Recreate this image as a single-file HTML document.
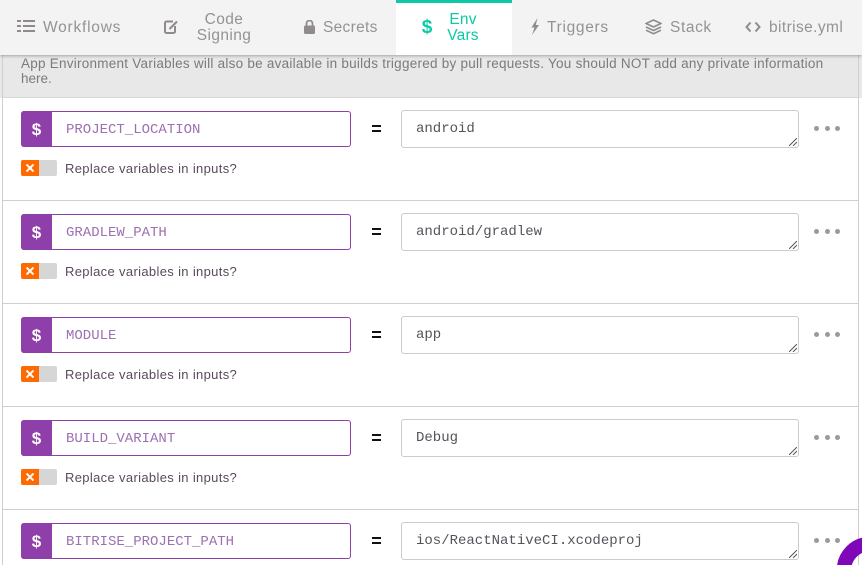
<!DOCTYPE html>
<html><head><meta charset="utf-8">
<style>
html,body{margin:0;padding:0;background:#fff}
body{width:862px;height:565px;overflow:hidden;position:relative;font-family:"Liberation Sans",sans-serif}
.abs{position:absolute}
.nav{position:absolute;left:0;top:0;width:862px;height:55px;background:#f3f3f3;box-shadow:0 1px 3px rgba(0,0,0,.3);z-index:5}
.t{position:absolute;color:#969294;font-size:15.5px;line-height:16px;white-space:nowrap}
.c{text-align:center}
.active{position:absolute;left:396px;top:0;width:116px;height:55px;background:#fff;border-top:3px solid #0dc9a5;box-sizing:border-box}
.note{position:absolute;left:0;top:55px;width:862px;height:43px;background:#e8e8e8;color:#7d797c;font-size:13.5px;line-height:15px}
.note span{position:absolute;left:21px;white-space:nowrap}
.vl{position:absolute;top:55px;width:1px;height:510px;background:#cfcfcf;z-index:1}
.line{position:absolute;left:3px;width:855px;height:1px;background:#cfcfcf}
.key{position:absolute;left:21px;width:330px;height:36px;border:1px solid #8f3fa9;border-radius:3px;box-sizing:border-box;background:#fff}
.dollar{position:absolute;left:-1px;top:-1px;width:31px;height:36px;background:#8f3fa9;border-radius:3px 0 0 3px;color:#fff;font-weight:bold;font-size:17px;line-height:37px;text-align:center}
.kt{position:absolute;left:44px;top:0;line-height:36px;font-family:"Liberation Mono",monospace;font-size:14px;color:#9c70b2;white-space:nowrap}
.eq{position:absolute;left:372px;width:9px;height:7px;border-top:2.5px solid #111;border-bottom:2.5px solid #111;box-sizing:border-box}
.val{position:absolute;left:401px;width:398px;height:38px;border:1px solid #cccccc;border-radius:3px;box-sizing:border-box;background:#fff;font-family:"Liberation Mono",monospace;font-size:14px;line-height:37px;color:#56525a;padding-left:14px}
.val svg{position:absolute;right:1px;bottom:1px}
.dots{position:absolute;left:814px;width:26px;height:5px}
.dots i{position:absolute;top:0;width:5px;height:5px;border-radius:50%;background:#9a9a9a}
.tog{position:absolute;left:21px;width:36px;height:16px;border-radius:2px;background:#d6d6d6}
.tog b{position:absolute;left:0;top:0;width:18px;height:16px;background:#ff6a00;border-radius:2px 0 0 2px}
.tog svg{position:absolute;left:5px;top:4px}
.rep{position:absolute;left:65px;font-size:13px;line-height:16px;color:#5a4a5c;white-space:nowrap;letter-spacing:.34px}
</style></head>
<body>
<div class="note"><span style="top:1px;letter-spacing:.25px">App Environment Variables will also be available in builds triggered by pull requests. You should NOT add any private information</span><span style="top:16px">here.</span></div>
<div class="vl" style="left:2px"></div>
<div class="vl" style="left:858px"></div>

<div class="nav">
<div class="active"></div>
<svg class="abs" style="left:17px;top:20px" width="18" height="13" viewBox="0 0 18 13" fill="#8f8b8d"><rect x="0" y="0" width="4" height="2"/><rect x="6" y="0" width="12" height="2"/><rect x="0" y="5" width="4" height="2"/><rect x="6" y="5" width="12" height="2"/><rect x="0" y="10" width="4" height="2"/><rect x="6" y="10" width="12" height="2"/></svg>
<div class="t" style="left:43px;top:20px;letter-spacing:.78px">Workflows</div>
<svg class="abs" style="left:163px;top:19px" width="16" height="16" viewBox="0 0 16 16" fill="none" stroke="#8f8b8d"><path d="M10 2.500H3.500a1.500 1.500 0 0 0-1.500 1.500v8.500a1.500 1.500 0 0 0 1.500 1.500h7a1.500 1.500 0 0 0 1.500-1.500V7" stroke-width="2"/><path d="M6.500 10l7.500-7.500" stroke-width="2"/></svg>
<div class="t c" style="left:184px;top:12px;width:80px;letter-spacing:.4px">Code<br>Signing</div>
<svg class="abs" style="left:304px;top:20px" width="11" height="14" viewBox="0 0 11 14" fill="#8f8b8d"><rect x="0" y="5.500" width="11" height="8.500" rx="1.500"/><path d="M2.500 6V3.500a3 3 0 0 1 6 0V6" fill="none" stroke="#8f8b8d" stroke-width="1.800"/></svg>
<div class="t" style="left:323px;top:20px;letter-spacing:.3px">Secrets</div>
<svg class="abs" style="left:421px;top:16px" width="12" height="21" viewBox="0 0 12 21"><text x="6" y="17" text-anchor="middle" font-family="Liberation Sans" font-weight="bold" font-size="19" fill="#0dc9a5">$</text></svg>
<div class="t c" style="left:433px;top:12px;width:60px;color:#0dc9a5;letter-spacing:.2px">Env<br>Vars</div>
<svg class="abs" style="left:530px;top:18px" width="10" height="17" viewBox="0 0 10 17" fill="#8f8b8d"><path d="M7.500 0L1.500 9.500h3L2 17 9 7H5.800z"/></svg>
<div class="t" style="left:547px;top:20px;letter-spacing:.7px">Triggers</div>
<svg class="abs" style="left:645px;top:19px" width="17" height="16" viewBox="0 0 17 16" fill="none" stroke="#8f8b8d" stroke-width="1.600"><path d="M8.500 1L16 4.500 8.500 8 1 4.500z"/><path d="M1 8l7.500 3.500L16 8"/><path d="M1 11.200l7.500 3.500 7.500-3.500"/></svg>
<div class="t" style="left:670px;top:20px;letter-spacing:.6px">Stack</div>
<svg class="abs" style="left:745px;top:21px" width="16" height="12" viewBox="0 0 16 12" fill="none" stroke="#8f8b8d" stroke-width="2"><path d="M5.500 1.500L1.500 6l4 4.500"/><path d="M10.500 1.500l4 4.500-4 4.500"/></svg>
<div class="t" style="left:769px;top:20px;letter-spacing:.4px">bitrise.yml</div>
</div>

<div class="line" style="top:97px;background:#d8d8d8"></div>
<div class="line" style="top:200px"></div>
<div class="line" style="top:303px"></div>
<div class="line" style="top:406px"></div>
<div class="line" style="top:509px"></div>

<div class="key" style="top:111px"><div class="dollar">$</div><div class="kt">PROJECT_LOCATION</div></div>
<div class="eq" style="top:125px"></div>
<div class="val" style="top:110px">android<svg width="8" height="8" viewBox="0 0 8 8" stroke="#555" fill="none"><path d="M0 8L8 0M4 8L8 4"/></svg></div>
<div class="dots" style="top:126px"><i style="left:0"></i><i style="left:10.500px"></i><i style="left:21px"></i></div>
<div class="tog" style="top:160px"><b></b><svg width="8" height="8" viewBox="0 0 8 8" stroke="#fff" stroke-width="2"><path d="M0.500 0.500l7 7M7.500 0.500l-7 7"/></svg></div>
<div class="rep" style="top:161px">Replace variables in inputs?</div>

<div class="key" style="top:214px"><div class="dollar">$</div><div class="kt">GRADLEW_PATH</div></div>
<div class="eq" style="top:228px"></div>
<div class="val" style="top:213px">android/gradlew<svg width="8" height="8" viewBox="0 0 8 8" stroke="#555" fill="none"><path d="M0 8L8 0M4 8L8 4"/></svg></div>
<div class="dots" style="top:229px"><i style="left:0"></i><i style="left:10.500px"></i><i style="left:21px"></i></div>
<div class="tog" style="top:263px"><b></b><svg width="8" height="8" viewBox="0 0 8 8" stroke="#fff" stroke-width="2"><path d="M0.500 0.500l7 7M7.500 0.500l-7 7"/></svg></div>
<div class="rep" style="top:264px">Replace variables in inputs?</div>

<div class="key" style="top:317px"><div class="dollar">$</div><div class="kt">MODULE</div></div>
<div class="eq" style="top:331px"></div>
<div class="val" style="top:316px">app<svg width="8" height="8" viewBox="0 0 8 8" stroke="#555" fill="none"><path d="M0 8L8 0M4 8L8 4"/></svg></div>
<div class="dots" style="top:332px"><i style="left:0"></i><i style="left:10.500px"></i><i style="left:21px"></i></div>
<div class="tog" style="top:366px"><b></b><svg width="8" height="8" viewBox="0 0 8 8" stroke="#fff" stroke-width="2"><path d="M0.500 0.500l7 7M7.500 0.500l-7 7"/></svg></div>
<div class="rep" style="top:367px">Replace variables in inputs?</div>

<div class="key" style="top:420px"><div class="dollar">$</div><div class="kt">BUILD_VARIANT</div></div>
<div class="eq" style="top:434px"></div>
<div class="val" style="top:419px">Debug<svg width="8" height="8" viewBox="0 0 8 8" stroke="#555" fill="none"><path d="M0 8L8 0M4 8L8 4"/></svg></div>
<div class="dots" style="top:435px"><i style="left:0"></i><i style="left:10.500px"></i><i style="left:21px"></i></div>
<div class="tog" style="top:469px"><b></b><svg width="8" height="8" viewBox="0 0 8 8" stroke="#fff" stroke-width="2"><path d="M0.500 0.500l7 7M7.500 0.500l-7 7"/></svg></div>
<div class="rep" style="top:470px">Replace variables in inputs?</div>

<div class="key" style="top:523px"><div class="dollar">$</div><div class="kt">BITRISE_PROJECT_PATH</div></div>
<div class="eq" style="top:537px"></div>
<div class="val" style="top:522px">ios/ReactNativeCI.xcodeproj<svg width="8" height="8" viewBox="0 0 8 8" stroke="#555" fill="none"><path d="M0 8L8 0M4 8L8 4"/></svg></div>
<div class="dots" style="top:538px"><i style="left:0"></i><i style="left:10.500px"></i><i style="left:21px"></i></div>

<svg class="abs" style="left:830px;top:535px;z-index:3" width="32" height="30" viewBox="0 0 32 30"><circle cx="40" cy="35" r="26" fill="none" stroke="#7f07b8" stroke-width="14.500"/></svg>
</body></html>
